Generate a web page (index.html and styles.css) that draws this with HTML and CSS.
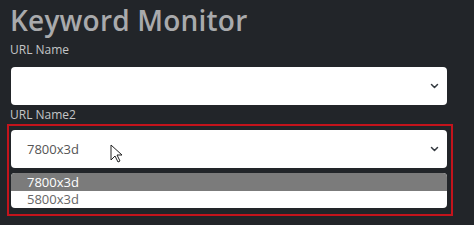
FILE: index.html
```html
<!DOCTYPE html>
<html lang="en">
<head>
  <meta charset="UTF-8">
  <title>Keyword Monitor</title>
  <link rel="stylesheet" href="styles.css">
</head>
<body>
  <div class="page">
    <h1>Keyword Monitor</h1>

    <!-- first url -->
    <label class="field-label">URL Name</label>
    <div class="select">
      <span class="select-value"></span>
      <svg class="chevron" width="9" height="6" viewBox="0 0 9 6"><path d="M1.5 1.5l3 3 3-3" fill="none" stroke="#343a40" stroke-width="1.5" stroke-linecap="round" stroke-linejoin="round"/></svg>
    </div>

    <!-- second url, opened -->
    <label class="field-label second">URL Name2</label>
    <div class="highlight">
      <div class="select">
        <span class="select-value">7800x3d</span>
        <svg class="chevron" width="9" height="6" viewBox="0 0 9 6"><path d="M1.5 1.5l3 3 3-3" fill="none" stroke="#343a40" stroke-width="1.5" stroke-linecap="round" stroke-linejoin="round"/></svg>
      </div>
      <ul class="options">
        <li class="active">7800x3d</li>
        <li>5800x3d</li>
      </ul>
      <svg class="cursor" width="13" height="19" viewBox="0 0 13 19"><path d="M1 1v15l4-4 3 6 2-1-3-6h5z" fill="#fff" stroke="#222" stroke-width="1" stroke-linejoin="round"/></svg>
    </div>
  </div>
</body>
</html>
```

FILE: styles.css
```css
* {
  margin: 0;
  padding: 0;
  box-sizing: border-box;
}

body {
  background: #222529;
  font-family: 'Open Sans', 'Noto Sans', sans-serif;
}

.page {
  padding: 0 0 0 10px;
  width: 458px;
}

h1 {
  font-size: 28px;
  font-weight: 600;
  color: #a9aaac;
  line-height: 38px;
  margin-top: 1px;
  margin-bottom: 2px;
  letter-spacing: 0.2px;
}

.field-label {
  display: block;
  font-size: 12px;
  color: #c4c5c7;
  line-height: 18px;
  margin-bottom: 8px;
}

.field-label.second {
  margin-top: 1px;
  margin-bottom: 0;
}

.select {
  display: flex;
  align-items: center;
  justify-content: space-between;
  width: 436px;
  height: 38px;
  margin-left: 1px;
  padding: 0 8px 0 16px;
  background: #fff;
  border-radius: 4px;
  font-size: 13px;
  color: #555;
}

.highlight {
  position: relative;
  width: 446px;
  margin-left: -3px;
  border: 2px solid #c4141c;
  padding: 4px 4px 6px 2px;
}

.highlight .select {
  margin-left: 0;
}

.options {
  list-style: none;
  margin-top: 5px;
  width: 436px;
  background: #fff;
  border-radius: 4px;
  overflow: hidden;
  font-size: 13px;
}

.options li {
  height: 17px;
  line-height: 17px;
  padding-left: 16px;
  color: #666;
}

.options li.active {
  height: 18px;
  line-height: 18px;
  background: #7b7b7b;
  color: #fff;
}

.cursor {
  position: absolute;
  left: 101px;
  top: 18px;
}
```
